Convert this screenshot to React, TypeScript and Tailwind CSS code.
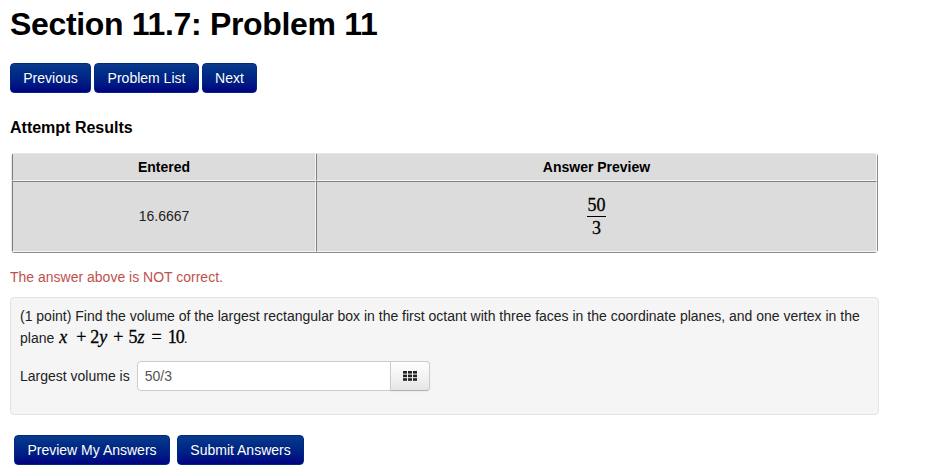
export default function App() {
  const btn =
    "h-[30px] rounded-[4px] border border-[#002a80] bg-gradient-to-b from-[#0b3a8c] to-[#000080] text-white text-[14px] leading-none flex items-center justify-center [text-shadow:0_-1px_0_rgba(0,0,0,0.25)]";
  const math = "font-['Liberation_Serif',serif] text-black [-webkit-text-stroke:0.3px_#000]";
  const cellBody = "text-center border-l border-l-[#808080] border-t border-t-[#808080] border-r border-r-[#f6f6f6] border-b border-b-[#f6f6f6]";
  const cellHead = "font-bold text-black text-center border-l border-l-[#808080] border-r border-r-[#f6f6f6] border-b border-b-[#f6f6f6]";
  return (
    <div className="w-[950px] h-[470px] overflow-hidden bg-white text-[14px] text-[#222] font-['Liberation_Sans',Arial,sans-serif] pl-[10px]">
      <h1 className="text-[32px] tracking-[-0.33px] leading-[40px] font-bold text-black pt-[4px] h-[45px] box-content">
        Section 11.7: Problem 11
      </h1>
      <div className="flex gap-[3px] mt-[14px]">
        <a className={`${btn} w-[81px]`}>Previous</a>
        <a className={`${btn} w-[105px]`}>Problem List</a>
        <a className={`${btn} w-[55px]`}>Next</a>
      </div>
      <h3 className="text-[16px] leading-[20px] font-bold text-black mt-[25px]">Attempt Results</h3>
      <table className="mt-[15px] ml-[1px] w-[867px] h-[100px] border-separate border-spacing-0 rounded-[4px] border border-t-[#e6e6e6] border-l-[#e6e6e6] border-r-[#8a8a8a] border-b-[#8a8a8a] bg-[#dcdcdc] table-fixed">
        <colgroup>
          <col className="w-[304px]" />
          <col />
        </colgroup>
        <thead>
          <tr className="h-[27px]">
            <th className={cellHead}>Entered</th>
            <th className={cellHead}>Answer Preview</th>
          </tr>
        </thead>
        <tbody>
          <tr>
            <td className={`${cellBody} text-[#222]`}>16.6667</td>
            <td className={cellBody}>
              <div className={`inline-flex flex-col items-center text-[18px] leading-none -translate-y-[1px] ${math}`}>
                <span className="pb-[3px] translate-y-[1px]">50</span>
                <span className="w-[19px] h-px bg-black" />
                <span className="pt-[2px]">3</span>
              </div>
            </td>
          </tr>
        </tbody>
      </table>
      <p className="text-[#c0504d] mt-[14px] leading-[20px]">The answer above is NOT correct.</p>
      <div className="mt-[10px] w-[869px] h-[118px] rounded-[4px] border border-[#e3e3e3] bg-[#f5f5f5] px-[9px] pt-[8px]">
        <p className="leading-[21px] text-[#222]">
          (1 point) Find the volume of the largest rectangular box in the first octant with three faces in the coordinate planes, and one vertex in the plane{" "}
          <span className={`text-[18px] leading-[21px] ${math}`}>
            <i className="ml-px mr-[9px]">x</i>
            <span className="mr-[4px]">+</span>
            <span>2</span>
            <i className="mr-[6px]">y</i>
            <span className="mr-[5px]">+</span>
            <span>5</span>
            <i className="mr-[7px]">z</i>
            <span className="mr-[6px]">=</span>
            <span className="tracking-[-1px]">10</span>
          </span>
          .
        </p>
        <div className="flex items-center mt-[12px]">
          <span className="mr-[7px]">Largest volume is</span>
          <div className="flex h-[30px] w-[293px]">
            <div className="flex-1 bg-white border border-[#ccc] rounded-l-[4px] px-[7px] flex items-center text-[#555]">50/3</div>
            <div className="w-[40px] -ml-px border border-[#ccc] border-b-[#b3b3b3] rounded-r-[4px] shadow-[0_1px_2px_rgba(0,0,0,0.05)] bg-gradient-to-b from-white to-[#e6e6e6] flex items-center justify-center">
              <svg width="14" height="10" viewBox="0 0 14 10" fill="#222">
                <rect x="0" y="0" width="4" height="2.6" /><rect x="5" y="0" width="4" height="2.6" /><rect x="10" y="0" width="4" height="2.6" />
                <rect x="0" y="3.6" width="4" height="2.6" /><rect x="5" y="3.6" width="4" height="2.6" /><rect x="10" y="3.6" width="4" height="2.6" />
                <rect x="0" y="7.2" width="4" height="2.6" /><rect x="5" y="7.2" width="4" height="2.6" /><rect x="10" y="7.2" width="4" height="2.6" />
              </svg>
            </div>
          </div>
        </div>
      </div>
      <div className="flex gap-[7px] mt-[20px] ml-[4px]">
        <a className={`${btn} w-[156px]`}>Preview My Answers</a>
        <a className={`${btn} w-[127px]`}>Submit Answers</a>
      </div>
    </div>
  );
}
